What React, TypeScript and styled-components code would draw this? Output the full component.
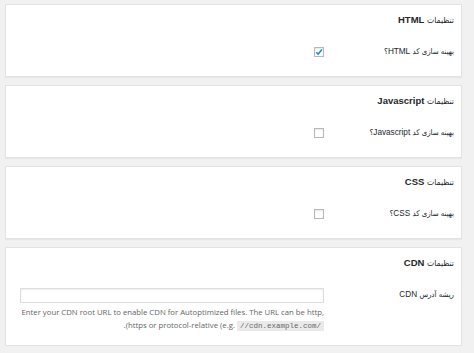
import React from "react";
import styled, { createGlobalStyle } from "styled-components";

const Global = createGlobalStyle`
  html, body { margin: 0; padding: 0; }
  body {
    background: #f1f1f1;
    direction: rtl;
    font-family: "Liberation Sans", "DejaVu Sans Condensed", "DejaVu Sans", sans-serif;
    color: #444;
  }
`;

const Page = styled.div`
  padding: 4px 12px 0 5px;
  display: flex;
  flex-direction: column;
  gap: 8px;
`;

const Panel = styled.section`
  background: #fff;
  border: 1px solid #e3e3e3;
  box-shadow: 0 1px 1px rgba(0, 0, 0, 0.04);
  padding: 8px 7px 0 15px;
`;

const Heading = styled.h2`
  margin: 0;
  font-family: "Liberation Sans", "DejaVu Sans Condensed", "DejaVu Sans", sans-serif;
  font-size: 9.5px;
  font-weight: bold;
  line-height: 14px;
  color: #23282d;
`;

const Fa = styled.span<{ $size: number }>`
  font-family: "DejaVu Sans Condensed", "DejaVu Sans", sans-serif;
  font-size: ${(p) => p.$size}px;
  font-weight: normal;
`;

const Row = styled.div<{ $bottom: number }>`
  display: grid;
  grid-template-columns: 130px 1fr;
  margin-top: 18px;
  padding-bottom: ${(p) => p.$bottom}px;
`;

const Label = styled.div`
  font-size: 8.2px;
  line-height: 14px;
  color: #23282d;
`;

const Field = styled.div`
  display: flex;
  flex-direction: column;
  align-items: flex-start;
`;

const Box = styled.span`
  width: 10px;
  height: 10px;
  margin-top: 2px;
  box-sizing: border-box;
  border: 1px solid #b4b9be;
  background: #fff;
  box-shadow: inset 0 1px 2px rgba(0, 0, 0, 0.1);
  display: flex;
  align-items: center;
  justify-content: center;
`;

const TextInput = styled.input`
  width: 304px;
  height: 15px;
  box-sizing: border-box;
  border: 1px solid #ddd;
  box-shadow: inset 0 1px 2px rgba(0, 0, 0, 0.07);
  background: #fff;
  margin: 0;
  padding: 0 3px;
`;

const Description = styled.p`
  margin: 3px 0 0;
  width: 304px;
  font-family: "Open Sans", sans-serif;
  font-size: 7.75px;
  line-height: 13px;
  color: #666;
`;

const Tail = styled.span`
  unicode-bidi: isolate;
`;

const Code = styled.code`
  direction: ltr;
  unicode-bidi: embed;
  font-family: "Liberation Mono", monospace;
  font-size: 7.5px;
  white-space: nowrap;
  background: #eaeaea;
  padding: 1px 3px;
`;

function Check({ checked }: { checked?: boolean }) {
  return (
    <Box>
      {checked && (
        <svg width="8" height="8" viewBox="0 0 8 8">
          <path d="M1.2 4.2 L3.2 6.1 L6.9 1.6" fill="none" stroke="#1e8cbe" strokeWidth="1.5" />
        </svg>
      )}
    </Box>
  );
}

function CheckPanel({ name, checked }: { name: string; checked?: boolean }) {
  return (
    <Panel>
      <Heading>
        <Fa $size={8.5}>تنظیمات</Fa> {name}
      </Heading>
      <Row $bottom={17}>
        <Label>
          <Fa $size={7.8}>بهینه سازی کد</Fa> {name}؟
        </Label>
        <Field>
          <Check checked={checked} />
        </Field>
      </Row>
    </Panel>
  );
}

export default function App() {
  return (
    <>
      <Global />
      <Page>
        <CheckPanel name="HTML" checked />
        <CheckPanel name="Javascript" />
        <CheckPanel name="CSS" />
        <Panel>
          <Heading>
            <Fa $size={8.5}>تنظیمات</Fa> CDN
          </Heading>
          <Row $bottom={12}>
            <Label>
              <Fa $size={7.8}>ریشه آدرس</Fa> CDN
            </Label>
            <Field>
              <TextInput type="text" />
              <Description>
                Enter your CDN root URL to enable CDN for Autoptimized files. The URL can be http, https or
                protocol-relative (e.g. <Code>//cdn.example.com/</Code>
                <Tail>).</Tail>
              </Description>
            </Field>
          </Row>
        </Panel>
      </Page>
    </>
  );
}
